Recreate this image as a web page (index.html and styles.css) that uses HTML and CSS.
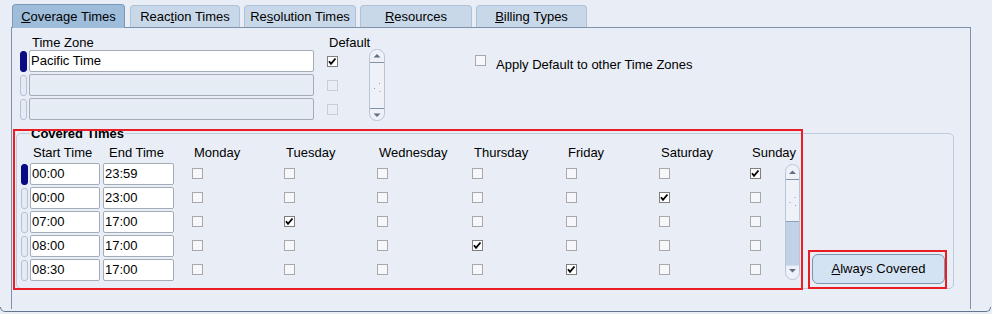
FILE: index.html
```html
<!DOCTYPE html>
<html>
<head>
<meta charset="utf-8">
<link rel="stylesheet" href="styles.css">
</head>
<body>
<div class="tabs">
  <div class="tab active w1"><u>C</u>overage Times</div>
  <div class="tab w2">Reac<u>t</u>ion Times</div>
  <div class="tab w3">Re<u>s</u>olution Times</div>
  <div class="tab w4"><u>R</u>esources</div>
  <div class="tab w5"><u>B</u>illing Types</div>
</div>
<div class="panel">
  <div class="tz">
    <div class="tz-table">
      <div class="tz-head"><span class="lbl-tz">Time Zone</span><span>Default</span></div>
      <div class="tz-row"><span class="ind cur"></span><div class="field">Pacific Time</div><span class="cb on"><svg width="9" height="9" viewBox="0 0 9 9"><path d="M1 4.2 L3 6.8 L7.5 1.5" fill="none" stroke="#000" stroke-width="1.8"/></svg></span></div>
      <div class="tz-row"><span class="ind"></span><div class="field empty"></div><span class="cb dis"></span></div>
      <div class="tz-row"><span class="ind"></span><div class="field empty"></div><span class="cb dis"></span></div>
    </div>
    <svg class="vs1" width="16" height="72" viewBox="0 0 16 72">
      <rect x="0.5" y="0.5" width="15" height="71" rx="7" fill="#eef2f8" stroke="#b7c5d7"/>
      <path d="M4.5 8.5 L11.5 8.5 L8 5 Z" fill="#5e6f85"/>
      <line x1="1" y1="13.5" x2="15" y2="13.5" stroke="#8293a8"/>
      <path d="M5 40 l1 -1 M10 35 l1 -1 M10.5 43 l1 -1" stroke="#8a9ab0" stroke-width="1"/>
      <line x1="1" y1="59.5" x2="15" y2="59.5" stroke="#8293a8"/>
      <path d="M4.5 64.5 L11.5 64.5 L8 68 Z" fill="#5e6f85"/>
    </svg>
    <div class="apply"><span class="cb"></span><span class="apply-txt">Apply Default to other Time Zones</span></div>
  </div>
  <div class="group">
    <div class="group-title">Covered Times</div>
    <div class="group-body">
      <div class="ct">
        <span></span>
        <span class="h hs">Start Time</span>
        <span class="h he">End Time</span>
        <span class="h">Monday</span>
        <span class="h">Tuesday</span>
        <span class="h">Wednesday</span>
        <span class="h">Thursday</span>
        <span class="h">Friday</span>
        <span class="h">Saturday</span>
        <span class="h">Sunday</span>
        <span></span>

        <span class="ind cur"></span><div class="field s">00:00</div><div class="field e">23:59</div>
        <span class="cb"></span><span class="cb"></span><span class="cb"></span><span class="cb"></span><span class="cb"></span><span class="cb"></span>
        <span class="cb on"><svg width="9" height="9" viewBox="0 0 9 9"><path d="M1 4.2 L3 6.8 L7.5 1.5" fill="none" stroke="#000" stroke-width="1.8"/></svg></span>

        <span class="ind"></span><div class="field s">00:00</div><div class="field e">23:00</div>
        <span class="cb"></span><span class="cb"></span><span class="cb"></span><span class="cb"></span><span class="cb"></span>
        <span class="cb on"><svg width="9" height="9" viewBox="0 0 9 9"><path d="M1 4.2 L3 6.8 L7.5 1.5" fill="none" stroke="#000" stroke-width="1.8"/></svg></span>
        <span class="cb"></span>

        <span class="ind"></span><div class="field s">07:00</div><div class="field e">17:00</div>
        <span class="cb"></span>
        <span class="cb on"><svg width="9" height="9" viewBox="0 0 9 9"><path d="M1 4.2 L3 6.8 L7.5 1.5" fill="none" stroke="#000" stroke-width="1.8"/></svg></span>
        <span class="cb"></span><span class="cb"></span><span class="cb"></span><span class="cb"></span><span class="cb"></span>

        <span class="ind"></span><div class="field s">08:00</div><div class="field e">17:00</div>
        <span class="cb"></span><span class="cb"></span><span class="cb"></span>
        <span class="cb on"><svg width="9" height="9" viewBox="0 0 9 9"><path d="M1 4.2 L3 6.8 L7.5 1.5" fill="none" stroke="#000" stroke-width="1.8"/></svg></span>
        <span class="cb"></span><span class="cb"></span><span class="cb"></span>

        <span class="ind"></span><div class="field s">08:30</div><div class="field e">17:00</div>
        <span class="cb"></span><span class="cb"></span><span class="cb"></span><span class="cb"></span>
        <span class="cb on"><svg width="9" height="9" viewBox="0 0 9 9"><path d="M1 4.2 L3 6.8 L7.5 1.5" fill="none" stroke="#000" stroke-width="1.8"/></svg></span>
        <span class="cb"></span><span class="cb"></span>

        <svg class="vs2" width="15" height="116" viewBox="0 0 15 116">
          <rect x="0.5" y="0.5" width="14" height="115" rx="7" fill="#eef2f8" stroke="#b7c5d7"/>
          <rect x="1" y="57" width="13" height="45" fill="#c1d1e6"/>
          <path d="M4 10 L11 10 L7.5 6.5 Z" fill="#5e6f85"/>
          <line x1="1" y1="15.5" x2="14" y2="15.5" stroke="#8293a8"/>
          <path d="M4.5 39 l1 -1 M9.5 34 l1 -1 M10 42 l1 -1" stroke="#8a9ab0" stroke-width="1"/>
          <line x1="1" y1="57.5" x2="14" y2="57.5" stroke="#8ea0b6"/>
          <line x1="1" y1="101.5" x2="14" y2="101.5" stroke="#d3dcea"/>
          <path d="M4 105 L11 105 L7.5 108.5 Z" fill="#5e6f85"/>
        </svg>
      </div>
      <button class="btn"><u>A</u>lways Covered</button>
    </div>
  </div>
</div>
<div class="frame"></div>
<div class="note n1"></div>
<div class="note n2"></div>
</body>
</html>
```
FILE: styles.css
```css
* { box-sizing: border-box; }

body {
  margin: 0;
  width: 992px;
  height: 314px;
  overflow: hidden;
  position: relative;
  background: #e9eef6;
  font-family: "Liberation Sans", Arial, sans-serif;
  font-size: 13px;
  color: #000;
}

/* tabs */
.tabs {
  display: flex;
  align-items: flex-end;
  height: 27px;
  padding-left: 12px;
  gap: 4px;
}
.tab {
  height: 22px;
  border: 1px solid #aec2d8;
  border-bottom: none;
  border-radius: 4px 4px 0 0;
  background: #c9d8e9;
  text-align: center;
  line-height: 15px;
  padding-top: 3px;
  white-space: nowrap;
}
.tab.active {
  height: 24px;
  margin-bottom: -1px;
  margin-right: 1px;
  padding-top: 4px;
  background: #9ebddb;
  border-color: #7b98b7;
  position: relative;
  z-index: 1;
}
.w1 { width: 113px; }
.w2 { width: 110px; }
.w3 { width: 112px; }
.w4 { width: 112px; }
.w5 { width: 111px; }

/* panel */
.panel {
  margin-left: 11px;
  width: 960px;
  height: 282px;
  border: 1px solid #7d93ab;
  border-bottom: none;
}

.tz {
  display: flex;
  align-items: flex-start;
  height: 92px;
  padding: 7px 0 0 8px;
}
.tz-table {
  width: 318px;
  flex: none;
  display: flex;
  flex-direction: column;
  gap: 2px;
}
.tz-head {
  display: flex;
  height: 13px;
  line-height: 15px;
}
.tz-head span { flex: none; white-space: nowrap; }
.lbl-tz { margin-left: 12px; width: 297px; }
.tz-row {
  display: flex;
  align-items: center;
  height: 22px;
}
.tz-row .field { margin-left: 2px; width: 285px; }
.tz-row .cb { margin-left: 13px; }

.ind {
  display: block;
  width: 7px;
  height: 21px;
  border: 1px solid #b5c3d4;
  border-radius: 3px;
  background: #e4ebf4;
  flex: none;
}
.ind.cur { background: #0a0a82; border-color: #0a0a82; }

.field {
  height: 22px;
  border: 1px solid #a3acb7;
  border-radius: 2px;
  background: #fff;
  padding-left: 1px;
  line-height: 20px;
  white-space: nowrap;
  overflow: hidden;
}
.field.empty { background: #e6ecf4; }

.cb {
  display: block;
  width: 11px;
  height: 11px;
  border: 1px solid #a9a9a9;
  background: #f5f7fa;
  flex: none;
}
.cb.on { border-color: #7f7f7f; background: #fff; }
.cb.dis { border-color: #c9ced5; background: #e9eef6; }
.cb svg { display: block; }

.vs1 { flex: none; margin-left: 31px; margin-top: 14px; display: block; }

.apply {
  display: flex;
  align-items: flex-start;
  margin-left: 90px;
  margin-top: 20px;
}
.apply-txt { margin-left: 10px; margin-top: 2px; line-height: 15px; white-space: nowrap; }

/* covered times group */
.group {
  margin: 13px 0 0 4px;
  width: 938px;
  height: 156px;
  border: 1px solid #bccbdd;
  border-radius: 5px;
  padding: 0 8px 4px 4px;
  display: flex;
  flex-direction: column;
}
.group-title {
  align-self: flex-start;
  margin: -7px 0 0 9px;
  padding: 0 1px;
  height: 13px;
  line-height: 13px;
  font-weight: bold;
  background: #e9eef6;
  white-space: nowrap;
}
.group-body {
  flex: 1;
  display: flex;
  align-items: flex-end;
  margin-top: 5px;
}
.ct {
  align-self: flex-start;
  display: grid;
  grid-template-columns: 9px 73px 89px 92px 93px 95px 94px 93px 91px 35px 15px;
  grid-template-rows: 16px repeat(5, 22px);
  row-gap: 2px;
  align-items: center;
}
.h {
  line-height: 16px;
  white-space: nowrap;
  padding-left: 2px;
}
.hs { padding-left: 3px; }
.he { padding-left: 6px; }
.ct .field.s { width: 70px; }
.ct .field.e { width: 71px; }
.ct .cb { margin-top: -1px; }
.vs2 {
  display: block;
  grid-column: 11;
  grid-row: 2 / 7;
  align-self: start;
  margin-top: 1px;
}

.btn {
  margin-left: auto;
  width: 133px;
  height: 30px;
  border: 1px solid #7f95ad;
  border-radius: 6px;
  background: #d4e3f3;
  font: inherit;
  color: #000;
  padding: 0;
  line-height: 28px;
}

.frame {
  height: 5px;
  margin-top: -2px;
  margin-right: 1px;
  border: 1px solid #62778f;
  border-top: none;
  border-radius: 0 0 5px 5px;
}

/* red annotation boxes */
.note {
  position: absolute;
  border: 2px solid #ec1c24;
}
.n1 { left: 13px; top: 129px; width: 790px; height: 161px; }
.n2 { left: 808px; top: 250px; width: 139px; height: 39px; }
```
